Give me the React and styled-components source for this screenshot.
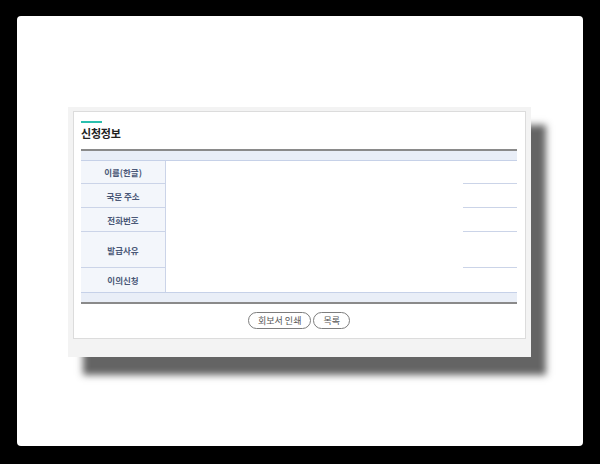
import React from "react";
import styled, { createGlobalStyle } from "styled-components";

const Global = createGlobalStyle`
  html, body { margin: 0; padding: 0; background: #000; }
  body { font-family: "Noto Sans CJK KR", "Noto Sans", sans-serif; }
`;

const Frame = styled.div`
  width: 600px;
  height: 464px;
  box-sizing: border-box;
  padding: 16px 17px 18px 17px;
  background: #000;
`;

const Panel = styled.div`
  width: 566px;
  height: 430px;
  box-sizing: border-box;
  background: #fff;
  border-radius: 4px;
  padding: 91px 0 0 51px;
`;

const Sheet = styled.div`
  width: 463px;
  height: 250px;
  box-sizing: border-box;
  background: #f3f3f3;
  padding: 4px 5px 18px 5px;
  box-shadow: 15px 18px 7px rgba(40, 40, 40, 0.72);
`;

const Card = styled.div`
  height: 100%;
  box-sizing: border-box;
  background: #fff;
  border: 1px solid #dcdcdc;
  padding: 9px 8px 0 7px;
  display: flex;
  flex-direction: column;
`;

const Accent = styled.div`
  width: 21px;
  height: 2px;
  background: #2bbfae;
`;

const Title = styled.h2`
  margin: 3px 0 0 0;
  font-size: 11px;
  line-height: 15px;
  font-weight: 700;
  color: #222;
  letter-spacing: -0.2px;
`;

const Table = styled.div`
  margin-top: 8px;
  border-top: 2px solid #8a8a8a;
  border-bottom: 2px solid #8a8a8a;
`;

const Band = styled.div`
  height: 9px;
  background: #e9eef7;
  border-${(p) => p.$edge}: 1px solid #c6d1e8;
`;

const Row = styled.div`
  display: grid;
  grid-template-columns: 85px 1fr 54px;
  height: ${(p) => p.$h}px;
`;

const Label = styled.div`
  background: #f3f6fb;
  border-right: 1px solid #cbd4e8;
  border-bottom: ${(p) => (p.$last ? "none" : "1px solid #cbd4e8")};
  display: flex;
  align-items: center;
  justify-content: center;
  font-size: 8.5px;
  font-weight: 700;
  color: #4a5877;
`;

const Value = styled.div``;

const Tail = styled.div`
  border-bottom: ${(p) => (p.$last ? "none" : "1px solid #cbd4e8")};
`;

const Actions = styled.div`
  display: flex;
  justify-content: center;
  gap: 2px;
  margin-top: 8px;
`;

const Pill = styled.button`
  height: 17px;
  box-sizing: border-box;
  padding: 0 9px;
  border: 1px solid #7d7d7d;
  border-radius: 9px;
  background: #fff;
  font-family: inherit;
  font-size: 9px;
  line-height: 15px;
  color: #555;
`;

const rows = [
  { label: "이름(한글)", h: 23 },
  { label: "국문 주소", h: 24 },
  { label: "전화번호", h: 24 },
  { label: "발급사유", h: 36 },
  { label: "이의신청", h: 24 },
];

export default function App() {
  return (
    <>
      <Global />
      <Frame>
        <Panel>
          <Sheet>
            <Card>
              <Accent />
              <Title>신청정보</Title>
              <Table>
                <Band $edge="bottom" />
                {rows.map((r, i) => {
                  const last = i === rows.length - 1;
                  return (
                    <Row key={r.label} $h={r.h}>
                      <Label $last={last}>{r.label}</Label>
                      <Value />
                      <Tail $last={last} />
                    </Row>
                  );
                })}
                <Band $edge="top" />
              </Table>
              <Actions>
                <Pill>회보서 인쇄</Pill>
                <Pill>목록</Pill>
              </Actions>
            </Card>
          </Sheet>
        </Panel>
      </Frame>
    </>
  );
}
